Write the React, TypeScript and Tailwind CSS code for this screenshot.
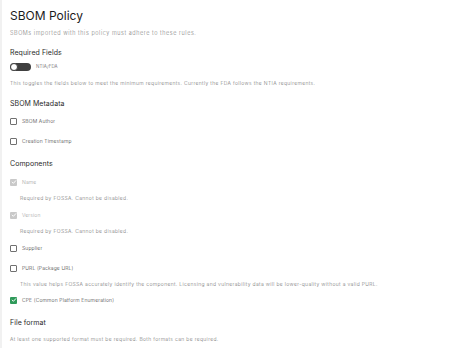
import React from 'react';

function Check({ checked, disabled }: { checked?: boolean; disabled?: boolean }) {
  if (checked) {
    return (
      <span
        className={`grid h-[7px] w-[7px] shrink-0 place-items-center rounded-[1px] ${
          disabled ? 'bg-[#c9c9c9]' : 'bg-[#2f9a5a]'
        }`}
      >
        <svg viewBox="0 0 10 10" className="h-[6px] w-[6px]" fill="none">
          <path d="M2 5.2l2 2 4-4.4" stroke="#fff" strokeWidth="1.6" strokeLinecap="round" strokeLinejoin="round" />
        </svg>
      </span>
    );
  }
  return <span className="h-[7px] w-[7px] shrink-0 rounded-[1px] border border-[#707070] bg-white" />;
}

function Row({ label, checked, disabled, className }: { label: string; checked?: boolean; disabled?: boolean; className: string }) {
  return (
    <div className={`flex h-[8px] items-center gap-[5px] ${className}`}>
      <Check checked={checked} disabled={disabled} />
      <span className={`text-[5px] font-light leading-[8px] tracking-[0.15px] ${disabled ? 'text-[#a0a0a0]' : 'text-[#444]'}`}>{label}</span>
    </div>
  );
}

function Help({ children, className }: { children: React.ReactNode; className: string }) {
  return <p className={`text-[5px] font-light leading-[8px] tracking-[0.35px] text-[#777] ${className}`}>{children}</p>;
}

function Heading({ children, className }: { children: React.ReactNode; className: string }) {
  return <h2 className={`text-[7px] font-normal leading-[10px] tracking-[0.05px] text-[#2a2a2a] ${className}`}>{children}</h2>;
}

export default function App() {
  return (
    <div className="h-[348px] w-[474px] overflow-hidden bg-white" style={{ fontFamily: 'Inter, "Noto Sans", sans-serif' }}>
      <div className="flex h-full flex-col border-l-[2px] border-[#f1f1f1] px-[8px] pt-[9px]">
        <h1 className="text-[12px] font-normal leading-[14px] text-[#1c1c1c]">SBOM Policy</h1>
        <p className="mt-[6px] text-[5.5px] font-light leading-[8px] tracking-[0.55px] text-[#808080]">
          SBOMs imported with this policy must adhere to these rules.
        </p>

        <Heading className="mt-[11px]">Required Fields</Heading>
        <div className="mt-[5px] flex h-[8px] items-center gap-[5px]">
          <span className="flex h-[8px] w-[21px] items-center rounded-full bg-[#3f3f3f]">
            <span className="h-[8px] w-[8px] rounded-full border border-[#3f3f3f] bg-white" />
          </span>
          <span className="text-[4.5px] font-light leading-[8px] tracking-[0.1px] text-[#555]">NTIA/FDA</span>
        </div>
        <Help className="mt-[8px]">
          This toggles the fields below to meet the minimum requirements. Currently the FDA follows the NTIA requirements.
        </Help>

        <Heading className="mt-[12px]">SBOM Metadata</Heading>
        <Row className="mt-[8px]" label="SBOM Author" />
        <Row className="mt-[12px]" label="Creation Timestamp" />

        <Heading className="mt-[14px]">Components</Heading>
        <Row className="mt-[9px]" label="Name" checked disabled />
        <Help className="mt-[8px] pl-[10px]">Required by FOSSA. Cannot be disabled.</Help>
        <Row className="mt-[9px]" label="Version" checked disabled />
        <Help className="mt-[8px] pl-[10px]">Required by FOSSA. Cannot be disabled.</Help>
        <Row className="mt-[9px]" label="Supplier" />
        <Row className="mt-[12px]" label="PURL (Package URL)" />
        <Help className="mt-[8px] pl-[10px]">
          This value helps FOSSA accurately identify the component. Licensing and vulnerability data will be lower-quality without a valid PURL.
        </Help>
        <Row className="mt-[8px]" label="CPE (Common Platform Enumeration)" checked />

        <Heading className="mt-[14px]">File format</Heading>
        <Help className="mt-[7px]">At least one supported format must be required. Both formats can be required.</Help>
      </div>
    </div>
  );
}
